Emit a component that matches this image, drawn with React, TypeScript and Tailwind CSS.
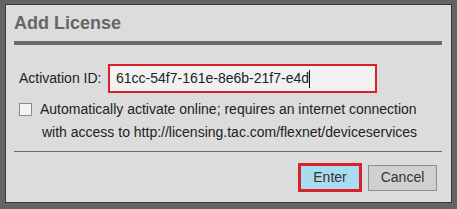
import React from "react";

export default function App() {
  return (
    <div className="w-[457px] h-[209px] bg-[#646464] pt-[4px] pl-[5px]" style={{ fontFamily: '"Liberation Sans", Arial, sans-serif' }}>
      <div className="w-[447px] h-[199px] border border-[#3a3a3a] bg-[#dcdcdc] flex flex-col">
        <div className="px-[8px] pt-[8px]">
          <div className="text-[18px] leading-[21px] font-bold text-[#666666]">Add License</div>
          <div className="mt-[7px] h-[4px] bg-[#696969] w-[428px]" />
        </div>
        <div className="pl-[13px] mt-[19px] flex items-center h-[29px]">
          <span className="text-[14px] text-[#222] w-[89px]">Activation ID:</span>
          <div className="w-[269px] h-[29px] border-2 border-[#d8222b] bg-[#f2f2f2] flex items-center pl-[6px]">
            <span className="text-[14px] text-[#222]">61cc-54f7-161e-8e6b-21f7-e4d</span>
            <span className="w-px h-[18px] bg-[#111]" />
          </div>
        </div>
        <div className="pl-[13px] mt-[10px] flex items-start">
          <div className="mt-[0px] w-[13px] h-[13px] border border-[#8a8a8a] bg-[#f4f4f4] shrink-0" />
          <div className="ml-[8px] text-[14px] leading-[23px] text-[#222] -mt-[5px]">
            <div>Automatically activate online; requires an internet connection</div>
            <div className="ml-[2px]">with access to http://licensing.tac.com/flexnet/deviceservices</div>
          </div>
        </div>
        <div className="mx-[8px] mt-[7px] h-px bg-[#6a6a6a] w-[428px]" />
        <div className="flex justify-end gap-[6px] pr-[14px] mt-[11px] items-center">
          <button className="w-[64px] h-[29px] border-[3px] border-[#d8222b] bg-[#a8dcee] text-[14px] text-[#333] flex items-center justify-center">Enter</button>
          <button className="w-[69px] h-[26px] border border-[#8e8e8e] bg-[#d0d0d0] text-[14px] text-[#333] flex items-center justify-center">Cancel</button>
        </div>
      </div>
    </div>
  );
}
